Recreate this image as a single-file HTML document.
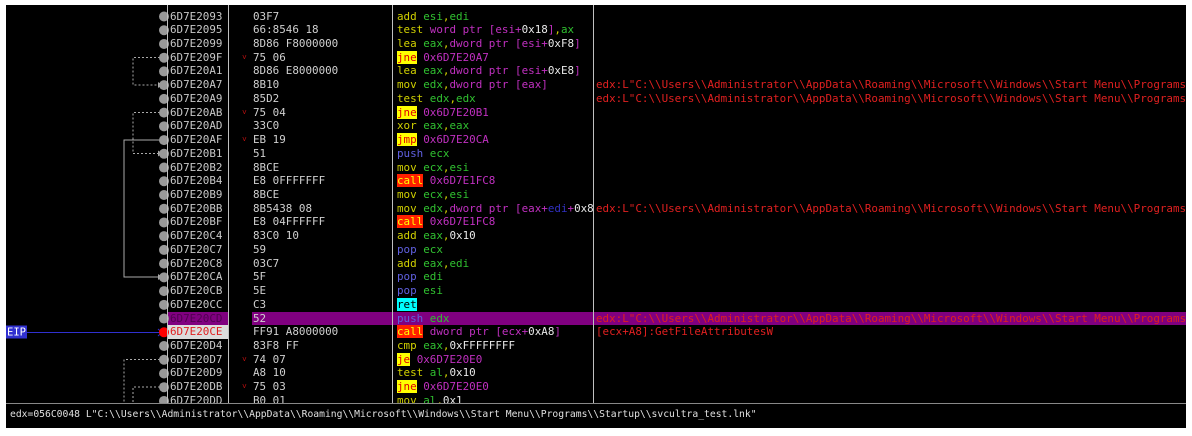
<!DOCTYPE html>
<html><head><meta charset="utf-8"><style>
body{margin:0;background:#fff;width:1192px;height:436px;overflow:hidden;position:relative;font-family:"DejaVu Sans Mono","Liberation Mono",monospace;font-size:10.9px}
#p{position:absolute;left:6px;top:5px;width:1180px;height:398px;background:#000;overflow:hidden}
.r{position:absolute;left:0;width:1180px;height:14px;line-height:14px;white-space:pre}
.a{position:absolute;left:163px;width:58px;padding-left:1px;color:#c8c8c8}
.b{position:absolute;left:247px;color:#d0d0d0}
.m{position:absolute;left:236px;color:#c01010;font-size:8px}
.d{position:absolute;left:391px;width:196px;overflow:hidden;color:#d0d000}
.c{position:absolute;left:590px;color:#e02020}
.g{color:#30c030}.k{color:#c030c0}.w{color:#e8e8e8}.u{color:#6060e0}
.j{background:#ffff00;color:#e00000}.cl{background:#ff2000;color:#ffff00}.rt{background:#00ffff;color:#000}
.v1{position:absolute;top:0;height:398px;width:1px;background:#c0c0c0}
#bar{position:absolute;left:6px;top:403px;width:1180px;height:25px;background:#000;border-top:1px solid #888;color:#e0e0e0;line-height:22px;padding-left:4px;box-sizing:border-box;white-space:pre;font-size:9.7px}
</style></head><body>
<div id="p">
<div style="position:absolute;left:162px;top:306.5px;width:60px;height:13.7px;background:#800080"></div>
<div style="position:absolute;left:246px;top:306.5px;width:934px;height:13.7px;background:#800080"></div>
<div style="position:absolute;left:162px;top:320.3px;width:60px;height:13.7px;background:#dcdcdc"></div>
<svg width="1180" height="398" style="position:absolute;left:0;top:0">
<g stroke="#aaa" fill="none" stroke-dasharray="2,2">
<path d="M154 52.5H127V80H152"/><path d="M154 107.5H127V148.5H152"/>
<path d="M154 354.5H118V398"/><path d="M154 382H127V398"/>
</g>
<path d="M154 135H118V272H152" stroke="#aaa" fill="none"/>
<g fill="#aaa"><path d="M152 77l4 3-4 3z"/><path d="M152 145.5l4 3-4 3z"/><path d="M152 269l4 3-4 3z"/></g>
<rect x="0" y="320.5" width="21" height="13" fill="#3030d0"/>
<text x="1" y="330.5" fill="#fff" font-family="DejaVu Sans Mono" font-size="10.5">EIP</text>
<path d="M21 327.5H156" stroke="#3030d0"/><path d="M152 324l4 3.5-4 3.5" stroke="#3030d0" fill="none"/>
<g id="circ"></g>
</svg>
<div class="v1" style="left:161px"></div><div class="v1" style="left:222px"></div><div class="v1" style="left:386px"></div><div class="v1" style="left:587px"></div>
</div>
<div id="bar">edx=056C0048 L"C:\\Users\\Administrator\\AppData\\Roaming\\Microsoft\\Windows\\Start Menu\\Programs\\Startup\\svcultra_test.lnk"</div>
<script>
var C='edx:L"C:\\\\Users\\\\Administrator\\\\AppData\\\\Roaming\\\\Microsoft\\\\Windows\\\\Start Menu\\\\Programs';
var R=[
["6D7E2093","","03F7",'add <span class=g>esi</span>,<span class=g>edi</span>'],
["6D7E2095","","66:8546 18",'test <span class=k>word ptr [esi+</span><span class=w>0x18</span><span class=k>]</span>,<span class=g>ax</span>'],
["6D7E2099","","8D86 F8000000",'lea <span class=g>eax</span>,<span class=k>dword ptr [esi+</span><span class=w>0xF8</span><span class=k>]</span>'],
["6D7E209F","v","75 06",'<span class=j>jne</span> <span class=k>0x6D7E20A7</span>'],
["6D7E20A1","","8D86 E8000000",'lea <span class=g>eax</span>,<span class=k>dword ptr [esi+</span><span class=w>0xE8</span><span class=k>]</span>'],
["6D7E20A7","","8B10",'mov <span class=g>edx</span>,<span class=k>dword ptr [eax]</span>',C],
["6D7E20A9","","85D2",'test <span class=g>edx</span>,<span class=g>edx</span>',C],
["6D7E20AB","v","75 04",'<span class=j>jne</span> <span class=k>0x6D7E20B1</span>'],
["6D7E20AD","","33C0",'xor <span class=g>eax</span>,<span class=g>eax</span>'],
["6D7E20AF","v","EB 19",'<span class=j>jmp</span> <span class=k>0x6D7E20CA</span>'],
["6D7E20B1","","51",'<span class=u>push</span> <span class=g>ecx</span>'],
["6D7E20B2","","8BCE",'mov <span class=g>ecx</span>,<span class=g>esi</span>'],
["6D7E20B4","","E8 0FFFFFFF",'<span class=cl>call</span> <span class=k>0x6D7E1FC8</span>'],
["6D7E20B9","","8BCE",'mov <span class=g>ecx</span>,<span class=g>esi</span>'],
["6D7E20BB","","8B5438 08",'mov <span class=g>edx</span>,<span class=k>dword ptr [eax+</span><span style="color:#3030c0">edi</span><span class=k>+</span><span class=w>0x8</span>',C],
["6D7E20BF","","E8 04FFFFFF",'<span class=cl>call</span> <span class=k>0x6D7E1FC8</span>'],
["6D7E20C4","","83C0 10",'add <span class=g>eax</span>,<span class=w>0x10</span>'],
["6D7E20C7","","59",'<span class=u>pop</span> <span class=g>ecx</span>'],
["6D7E20C8","","03C7",'add <span class=g>eax</span>,<span class=g>edi</span>'],
["6D7E20CA","","5F",'<span class=u>pop</span> <span class=g>edi</span>'],
["6D7E20CB","","5E",'<span class=u>pop</span> <span class=g>esi</span>'],
["6D7E20CC","","C3",'<span class=rt>ret</span>'],
["6D7E20CD","","52",'<span class=u>push</span> <span class=g>edx</span>',C],
["6D7E20CE","","FF91 A8000000",'<span class=cl>call</span> <span class=k>dword ptr [ecx+</span><span class=w>0xA8</span><span class=k>]</span>','[ecx+A8]:GetFileAttributesW'],
["6D7E20D4","","83F8 FF",'cmp <span class=g>eax</span>,<span class=w>0xFFFFFFFF</span>'],
["6D7E20D7","v","74 07",'<span class=j>je</span> <span class=k>0x6D7E20E0</span>'],
["6D7E20D9","","A8 10",'test <span class=g>al</span>,<span class=w>0x10</span>'],
["6D7E20DB","v","75 03",'<span class=j>jne</span> <span class=k>0x6D7E20E0</span>'],
["6D7E20DD","","B0 01",'mov <span class=g>al</span>,<span class=w>0x1</span>']];
var h='',c='';
R.forEach(function(x,i){var t=4.5+i*13.73;
var ac=i==22?'color:#500050':i==23?'color:#e02020':'';
h+='<div class=r style="top:'+t+'px"><span class=a style="'+ac+'">'+x[0]+'</span>'+(x[1]?'<span class=m>&#709;</span>':'')+'<span class=b>'+x[2]+'</span><span class=d>'+x[3]+'</span>'+(x[4]?'<span class=c>'+x[4]+'</span>':'')+'</div>';
c+='<circle cx="158" cy="'+(t+7)+'" r="5" fill="'+(i==23?'#ff0000':'#999')+'"/>';});
document.getElementById('circ').innerHTML=c;
var d=document.createElement('div');d.innerHTML=h;
while(d.firstChild)document.getElementById('p').appendChild(d.firstChild);
</script>
</body></html>
